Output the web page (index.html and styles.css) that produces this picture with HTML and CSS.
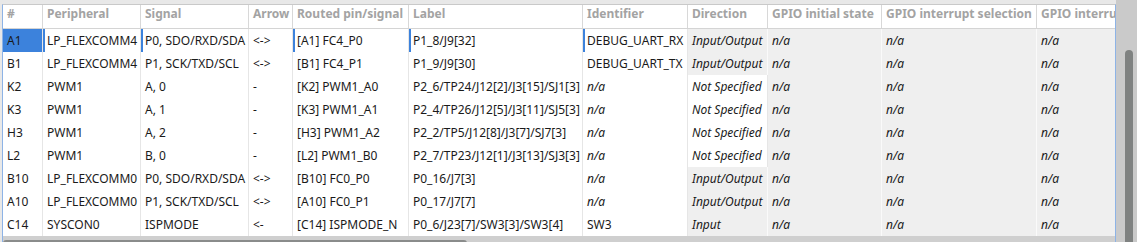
FILE: index.html
```html
<!DOCTYPE html>
<html lang="en">
<head>
  <meta charset="UTF-8" />
  <title>Pins</title>
  <link rel="stylesheet" href="styles.css">
</head>
<body>
  <div class="window">
    <div class="pane">
      <div class="table">
        <div class="row head">
          <div class="cell">#</div>
          <div class="cell">Peripheral</div>
          <div class="cell">Signal</div>
          <div class="cell">Arrow</div>
          <div class="cell">Routed pin/signal</div>
          <div class="cell">Label</div>
          <div class="cell">Identifier</div>
          <div class="cell">Direction</div>
          <div class="cell">GPIO initial state</div>
          <div class="cell">GPIO interrupt selection</div>
          <div class="cell">GPIO interrupt</div>
        </div>

        <div class="row">
          <div class="cell sel">A1</div>
          <div class="cell cur">LP_FLEXCOMM4</div>
          <div class="cell cur">P0, SDO/RXD/SDA</div>
          <div class="cell">&lt;-&gt;</div>
          <div class="cell cur">[A1] FC4_P0</div>
          <div class="cell cur">P1_8/J9[32]</div>
          <div class="cell cur">DEBUG_UART_RX</div>
          <div class="cell ro it">Input/Output</div>
          <div class="cell ro it">n/a</div>
          <div class="cell ro it">n/a</div>
          <div class="cell ro it">n/a</div>
        </div>
        <div class="row">
          <div class="cell">B1</div>
          <div class="cell">LP_FLEXCOMM4</div>
          <div class="cell">P1, SCK/TXD/SCL</div>
          <div class="cell">&lt;-&gt;</div>
          <div class="cell">[B1] FC4_P1</div>
          <div class="cell">P1_9/J9[30]</div>
          <div class="cell">DEBUG_UART_TX</div>
          <div class="cell ro it">Input/Output</div>
          <div class="cell ro it">n/a</div>
          <div class="cell ro it">n/a</div>
          <div class="cell ro it">n/a</div>
        </div>
        <div class="row">
          <div class="cell">K2</div>
          <div class="cell">PWM1</div>
          <div class="cell">A, 0</div>
          <div class="cell">-</div>
          <div class="cell">[K2] PWM1_A0</div>
          <div class="cell">P2_6/TP24/J12[2]/J3[15]/SJ1[3]</div>
          <div class="cell it">n/a</div>
          <div class="cell it">Not Specified</div>
          <div class="cell ro it">n/a</div>
          <div class="cell ro it">n/a</div>
          <div class="cell ro it">n/a</div>
        </div>
        <div class="row">
          <div class="cell">K3</div>
          <div class="cell">PWM1</div>
          <div class="cell">A, 1</div>
          <div class="cell">-</div>
          <div class="cell">[K3] PWM1_A1</div>
          <div class="cell">P2_4/TP26/J12[5]/J3[11]/SJ5[3]</div>
          <div class="cell it">n/a</div>
          <div class="cell it">Not Specified</div>
          <div class="cell ro it">n/a</div>
          <div class="cell ro it">n/a</div>
          <div class="cell ro it">n/a</div>
        </div>
        <div class="row">
          <div class="cell">H3</div>
          <div class="cell">PWM1</div>
          <div class="cell">A, 2</div>
          <div class="cell">-</div>
          <div class="cell">[H3] PWM1_A2</div>
          <div class="cell">P2_2/TP5/J12[8]/J3[7]/SJ7[3]</div>
          <div class="cell it">n/a</div>
          <div class="cell it">Not Specified</div>
          <div class="cell ro it">n/a</div>
          <div class="cell ro it">n/a</div>
          <div class="cell ro it">n/a</div>
        </div>
        <div class="row">
          <div class="cell">L2</div>
          <div class="cell">PWM1</div>
          <div class="cell">B, 0</div>
          <div class="cell">-</div>
          <div class="cell">[L2] PWM1_B0</div>
          <div class="cell">P2_7/TP23/J12[1]/J3[13]/SJ3[3]</div>
          <div class="cell it">n/a</div>
          <div class="cell it">Not Specified</div>
          <div class="cell ro it">n/a</div>
          <div class="cell ro it">n/a</div>
          <div class="cell ro it">n/a</div>
        </div>
        <div class="row">
          <div class="cell">B10</div>
          <div class="cell">LP_FLEXCOMM0</div>
          <div class="cell">P0, SDO/RXD/SDA</div>
          <div class="cell">&lt;-&gt;</div>
          <div class="cell">[B10] FC0_P0</div>
          <div class="cell">P0_16/J7[3]</div>
          <div class="cell it">n/a</div>
          <div class="cell ro it">Input/Output</div>
          <div class="cell ro it">n/a</div>
          <div class="cell ro it">n/a</div>
          <div class="cell ro it">n/a</div>
        </div>
        <div class="row">
          <div class="cell">A10</div>
          <div class="cell">LP_FLEXCOMM0</div>
          <div class="cell">P1, SCK/TXD/SCL</div>
          <div class="cell">&lt;-&gt;</div>
          <div class="cell">[A10] FC0_P1</div>
          <div class="cell">P0_17/J7[7]</div>
          <div class="cell it">n/a</div>
          <div class="cell ro it">Input/Output</div>
          <div class="cell ro it">n/a</div>
          <div class="cell ro it">n/a</div>
          <div class="cell ro it">n/a</div>
        </div>
        <div class="row">
          <div class="cell">C14</div>
          <div class="cell">SYSCON0</div>
          <div class="cell">ISPMODE</div>
          <div class="cell">&lt;-</div>
          <div class="cell">[C14] ISPMODE_N</div>
          <div class="cell">P0_6/J23[7]/SW3[3]/SW3[4]</div>
          <div class="cell">SW3</div>
          <div class="cell ro it">Input</div>
          <div class="cell ro it">n/a</div>
          <div class="cell ro it">n/a</div>
          <div class="cell ro it">n/a</div>
        </div>
      </div>
      <div class="hscroll"><div class="hthumb"></div></div>
    </div>
    <div class="vscroll"><div class="vthumb"></div></div>
  </div>
</body>
</html>
```

FILE: styles.css
```css
* { box-sizing: border-box; }
body {
  margin: 0;
  background: #e8e8e8;
  color: #1a1a1a;
  font-family: "Noto Sans", "Open Sans", sans-serif;
  font-size: 12px;
  overflow: hidden;
}
.window {
  display: flex;
  height: 242px;
}
.pane {
  width: 1114px;
  margin: 4px 0 0 2px;
  border-top: 1px solid #c9c9c9;
  border-left: 1px solid #8db3e6;
  border-right: 1px solid #8db3e6;
  display: flex; flex-direction: column;
  background: #dcdcdc;
}
.table {
  flex: 1;
  overflow: hidden;
  background: #fff;
}
.row {
  display: grid;
  grid-template-columns: 40px 98px 108px 44px 116px 174px 105px 80px 114px 155px 120px;
  height: 23px;
  width: 1154px;
}
.cell {
  padding: 0 4px;
  line-height: 23px;
  white-space: nowrap;
  overflow: hidden;
  border-right: 1px solid #e6e6e6;
}
.head {
  height: 24px;
  border-bottom: 1px solid #d4d4d4;
}
.head .cell {
  line-height: 18px;
  font-weight: bold;
  color: #a3a3a3;
  border-right-color: #d8d8d8;
}
.ro {
  background: #efefef;
  border-right-color: #fafafa;
}
.it { font-style: italic; }
.sel { background: #3c82dc; }
.cur { border-left: 2px solid #3c82dc; padding-left: 2px; }
.hscroll {
  height: 6px;
  background: #cfcfcf;
  padding-top: 4px;
  overflow: hidden;
}
.hthumb {
  width: 464px; height: 6px;
  background: #8a8c8b;
  border-radius: 3px;
}
.vscroll {
  width: 21px;
  background: #cacaca;
  padding: 50px 0 0 9px;
  overflow: hidden;
}
.vthumb {
  width: 8px; height: 220px;
  background: #7f8281;
  border-radius: 4px;
}
```
